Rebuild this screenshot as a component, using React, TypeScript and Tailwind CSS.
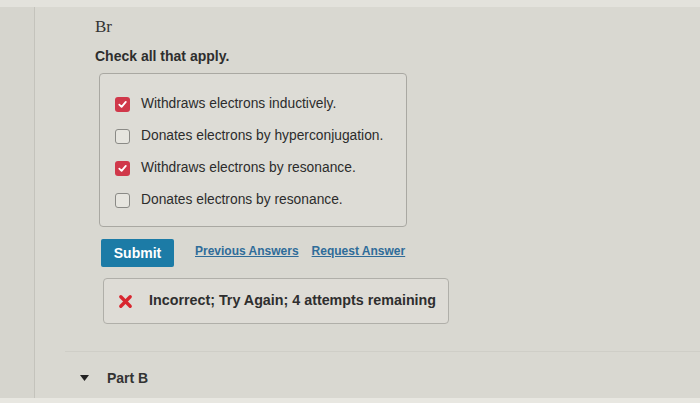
import React from "react";

const Checked = () => (
  <span className="flex h-[15px] w-[15px] items-center justify-center rounded-[3px] bg-[#d0384a]">
    <svg width="11" height="11" viewBox="0 0 12 12">
      <path d="M2.5 6.2 L5 8.6 L9.6 3.2" fill="none" stroke="#ffffff" strokeWidth="2" strokeLinecap="round" strokeLinejoin="round" />
    </svg>
  </span>
);

const Unchecked = () => (
  <span className="h-[15px] w-[15px] rounded-[3px] border border-[#8a8a86] bg-[#e6e5df]" />
);

const options = [
  { label: "Withdraws electrons inductively.", checked: true },
  { label: "Donates electrons by hyperconjugation.", checked: false },
  { label: "Withdraws electrons by resonance.", checked: true },
  { label: "Donates electrons by resonance.", checked: false },
];

export default function App() {
  return (
    <div className="flex h-[403px] w-[700px] flex-col overflow-hidden bg-[#d9d8d1] text-[#2a2a2a]" style={{ fontFamily: '"Liberation Sans", Arial, sans-serif' }}>
      <div className="h-[7px] bg-[#e3e2dc]" />
      <div className="flex flex-1">
        <div className="w-[35px] border-r border-[#c4c3bc] bg-[#d6d5ce]" />
        <div className="flex flex-1 flex-col">
          <div className="flex flex-col pl-[60px] pt-[8px]">
            <div className="text-[17px] leading-[24px] text-[#333]" style={{ fontFamily: '"Liberation Serif", serif' }}>Br</div>
            <div className="mt-[7px] text-[14px] font-bold leading-[20px] text-[#2e2e2e]">Check all that apply.</div>
            <div className="ml-[4px] mt-[7px] flex w-[308px] flex-col rounded-[4px] border border-[#a9a8a2] bg-[#dddcd6] pb-[10px] pl-[15px] pt-[14px]">
              {options.map((o) => (
                <div key={o.label} className="flex h-[32px] items-center gap-[11px]">
                  {o.checked ? <Checked /> : <Unchecked />}
                  <span className="text-[13.8px] text-[#2c2c2c]">{o.label}</span>
                </div>
              ))}
            </div>
            <div className="ml-[6px] mt-[12px] flex items-center">
              <div className="flex h-[28px] w-[73px] items-center justify-center rounded-[2px] bg-[#1c7ba6] text-[14px] font-bold text-white">Submit</div>
              <div className="mb-[5px] ml-[21px] flex gap-[13px] text-[12px] font-bold text-[#2f6c99] underline">
                <span>Previous Answers</span>
                <span>Request Answer</span>
              </div>
            </div>
            <div className="ml-[8px] mt-[11px] flex h-[46px] w-[346px] items-center rounded-[4px] border border-[#b0afa9] bg-[#dedcd6] pl-[14px]">
              <svg width="15" height="15" viewBox="0 0 16 16">
                <path d="M3 3 L13 13 M13 3 L3 13" stroke="#d8262f" strokeWidth="3.6" strokeLinecap="round" />
              </svg>
              <span className="ml-[16px] text-[14.3px] font-bold text-[#2e2e2e]">Incorrect; Try Again; 4 attempts remaining</span>
            </div>
          </div>
          <div className="ml-[30px] mt-[27px] flex flex-1 items-start border-t border-[#cfcec7] pl-[15px] pt-[17px]">
            <div className="flex h-[18px] items-center">
              <svg width="9" height="6" viewBox="0 0 9 6">
                <path d="M0 0 H9 L4.5 6 Z" fill="#222" />
              </svg>
              <span className="ml-[18px] text-[14px] font-bold leading-[18px] text-[#333]">Part B</span>
            </div>
          </div>
        </div>
      </div>
      <div className="h-[5px] bg-[#e8e7e1]" />
    </div>
  );
}
